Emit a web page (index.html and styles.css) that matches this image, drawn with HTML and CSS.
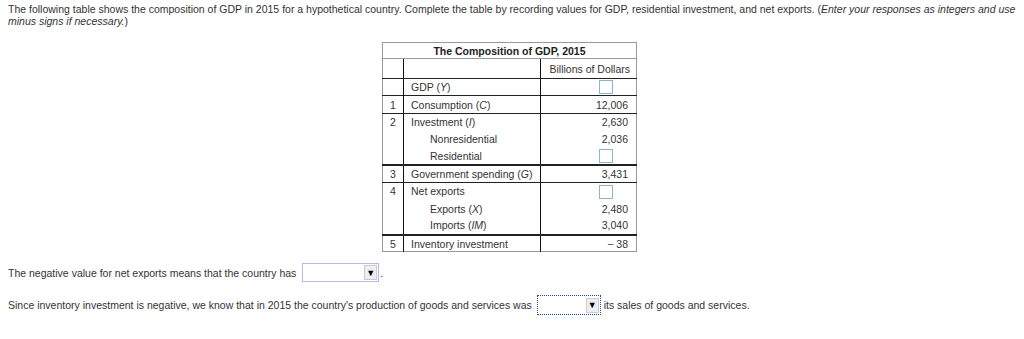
FILE: index.html
```html
<!DOCTYPE html>
<html>
<head>
<meta charset="utf-8">
<link rel="stylesheet" href="styles.css">
</head>
<body>
<p class="intro">The following table shows the composition of GDP in 2015 for a hypothetical country. Complete the table by recording values for GDP, residential investment, and net exports. (<em>Enter your responses as integers and use minus signs if necessary.</em>)</p>

<table class="gdp">
  <colgroup><col class="c-num"><col class="c-lab"><col class="c-val"></colgroup>
  <tr class="title"><th colspan="3">The Composition of GDP, 2015</th></tr>
  <tr class="head"><td class="num"></td><td class="lab"></td><td class="val">Billions of Dollars</td></tr>
  <tr class="sep"><td class="num"></td><td class="lab">GDP (<i>Y</i>)</td><td class="val"><span class="box"></span></td></tr>
  <tr class="sep"><td class="num">1</td><td class="lab">Consumption (<i>C</i>)</td><td class="val">12,006</td></tr>
  <tr class="sep"><td class="num">2</td><td class="lab">Investment (<i>I</i>)</td><td class="val">2,630</td></tr>
  <tr><td class="num"></td><td class="lab sub">Nonresidential</td><td class="val">2,036</td></tr>
  <tr><td class="num"></td><td class="lab sub">Residential</td><td class="val"><span class="box"></span></td></tr>
  <tr class="thick"><td class="num">3</td><td class="lab">Government spending (<i>G</i>)</td><td class="val">3,431</td></tr>
  <tr class="sep"><td class="num">4</td><td class="lab">Net exports</td><td class="val"><span class="box"></span></td></tr>
  <tr><td class="num"></td><td class="lab sub">Exports (<i>X</i>)</td><td class="val">2,480</td></tr>
  <tr><td class="num"></td><td class="lab sub">Imports (<i>IM</i>)</td><td class="val">3,040</td></tr>
  <tr class="thick"><td class="num">5</td><td class="lab">Inventory investment</td><td class="val">&minus; 38</td></tr>
</table>

<div class="q q1">The negative value for net exports means that the country has <span class="dd dd1"><span class="arrow">&#9660;</span></span><span class="dot">.</span></div>

<div class="q q2">Since inventory investment is negative, we know that in 2015 the country's production of goods and services was <span class="dd dd2"><span class="arrow">&#9660;</span></span> its sales of goods and services.</div>
</body>
</html>
```

FILE: styles.css
```css
body {
  margin: 0;
  padding: 3px 8px 0 8px;
  font-family: "Liberation Sans", Arial, sans-serif;
  font-size: 10.5px;
  color: #333;
}

.intro {
  margin: 0;
  line-height: 12px;
}

.gdp {
  border-collapse: collapse;
  table-layout: fixed;
  margin: 15px 0 0 374px;
  width: 254px;
  border: 1px solid #999;
  line-height: 12px;
}

.c-num { width: 21px; }
.c-lab { width: 137px; }
.c-val { width: 96px; }

.gdp th {
  font-weight: bold;
  color: #222;
  height: 15px;
  padding: 0;
  border-bottom: 1px solid #999;
  text-align: center;
}

.gdp td {
  box-sizing: border-box;
  padding: 0;
  height: 17.35px;
  white-space: nowrap;
}

.gdp .head td {
  height: 20px;
}

.gdp .num {
  text-align: center;
  border-right: 1px solid #111;
}

.gdp .lab {
  padding-left: 7px;
  border-right: 1px solid #111;
}

.gdp .lab.sub {
  padding-left: 26px;
}

.gdp .val {
  text-align: right;
  padding-right: 8px;
}

.gdp .head .val {
  padding-right: 6px;
}

.gdp tr.sep td {
  border-top: 1px solid #222;
}

.gdp tr.thick td {
  border-top: 2px solid #222;
}

.box {
  display: inline-block;
  width: 12px;
  height: 12px;
  border: 1px solid #8cb5c9;
  vertical-align: middle;
  margin-right: 15px;
}

.q {
  display: flex;
  align-items: center;
  white-space: pre;
}

.q1 {
  margin-top: 11px;
  height: 19px;
}

.q2 {
  margin-top: 13px;
  height: 20px;
}

.dd {
  display: inline-flex;
  justify-content: flex-end;
  align-items: center;
  box-sizing: border-box;
  background: #fff;
}

.dd1 {
  width: 77px;
  height: 19px;
  border: 1px solid #b0bde6;
  margin-left: 3px;
}

.dd2 {
  width: 64px;
  height: 20px;
  border: 1px dotted #1f47c0;
  margin-left: 2px;
}

.arrow {
  display: inline-flex;
  align-items: center;
  justify-content: center;
  box-sizing: border-box;
  width: 13px;
  height: 15px;
  margin-right: 1px;
  background: #eee;
  border: 1px solid #ccc;
  color: #000;
  font-size: 9px;
}

.dot {
  margin-left: 1px;
}
```
